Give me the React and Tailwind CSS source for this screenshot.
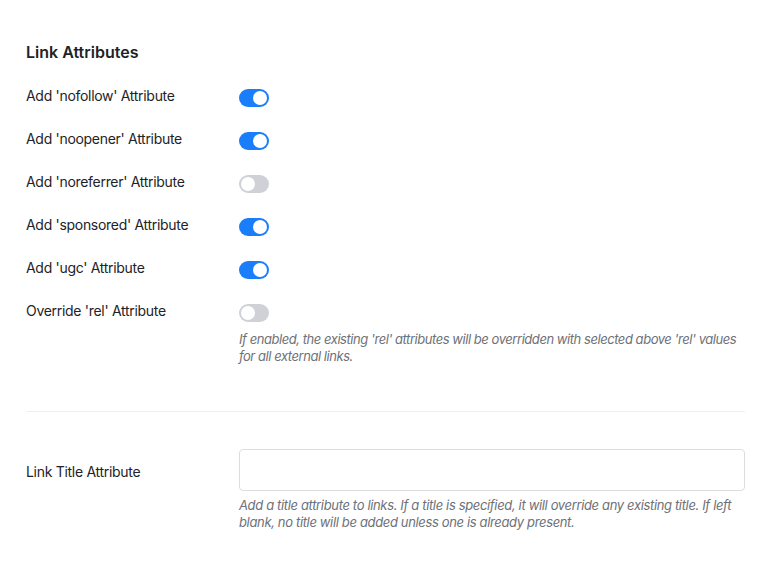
import { useState } from "react";

const ATTRS = [
  { key: "nofollow", label: "Add 'nofollow' Attribute", on: true },
  { key: "noopener", label: "Add 'noopener' Attribute", on: true },
  { key: "noreferrer", label: "Add 'noreferrer' Attribute", on: false },
  { key: "sponsored", label: "Add 'sponsored' Attribute", on: true },
  { key: "ugc", label: "Add 'ugc' Attribute", on: true },
];

function Toggle({ checked, onChange }) {
  return (
    <button
      type="button"
      role="switch"
      aria-checked={checked}
      onClick={() => onChange(!checked)}
      className={`relative inline-flex h-[18px] w-[30px] shrink-0 items-center rounded-full transition-colors ${
        checked ? "bg-[#1a7efb]" : "bg-[#cfd1d6]"
      }`}
    >
      <span
        className={`absolute top-[2px] h-[14px] w-[14px] rounded-full bg-white transition-all ${
          checked ? "left-[14px]" : "left-[2px]"
        }`}
      />
    </button>
  );
}

export default function App() {
  const [values, setValues] = useState(
    Object.fromEntries([...ATTRS.map((a) => [a.key, a.on]), ["override", false]])
  );
  const [title, setTitle] = useState("");

  const set = (key) => (v) => setValues((prev) => ({ ...prev, [key]: v }));

  return (
    <div className="min-h-[579px] bg-white pl-[26px] pr-[23px] pt-[42px] text-[#1d2327] font-['Inter','Noto_Sans',sans-serif]">
      <h2 className="text-[16px] font-semibold leading-[20px] text-[#1d2327]">Link Attributes</h2>

      <div className="mt-[24px] flex flex-col">
        {ATTRS.map((a) => (
          <div key={a.key} className="flex h-[43px] items-start">
            <div className="w-[213px] text-[14px] leading-[20px] tracking-[-0.3px]">{a.label}</div>
            <div className="pt-[3px]">
              <Toggle checked={values[a.key]} onChange={set(a.key)} />
            </div>
          </div>
        ))}
        <div className="flex items-start">
          <div className="w-[213px] text-[14px] leading-[20px] tracking-[-0.3px]">Override 'rel' Attribute</div>
          <div className="flex-1 pt-[3px]">
            <Toggle checked={values.override} onChange={set("override")} />
            <p className="mt-[3px] text-[13px] italic leading-[17px] tracking-[-0.45px] text-[#6e7178]">
              If enabled, the existing 'rel' attributes will be overridden with selected above 'rel' values
              for all external links.
            </p>
          </div>
        </div>
      </div>

      <div className="mt-[46px] h-px bg-[#eeeff1]" />

      <div className="mt-[37px] flex items-start">
        <label htmlFor="link-title" className="w-[213px] pt-[13px] text-[14px] leading-[20px] tracking-[-0.3px]">
          Link Title Attribute
        </label>
        <div className="flex-1">
          <input
            id="link-title"
            type="text"
            value={title}
            onChange={(e) => setTitle(e.target.value)}
            className="h-[42px] w-full rounded-[4px] border border-[#dcdde0] px-3 text-[14px] outline-none"
          />
          <p className="mt-[6px] text-[13px] italic leading-[17px] tracking-[-0.35px] text-[#6e7178]">
            Add a title attribute to links. If a title is specified, it will override any existing title. If left
            blank, no title will be added unless one is already present.
          </p>
        </div>
      </div>
    </div>
  );
}
